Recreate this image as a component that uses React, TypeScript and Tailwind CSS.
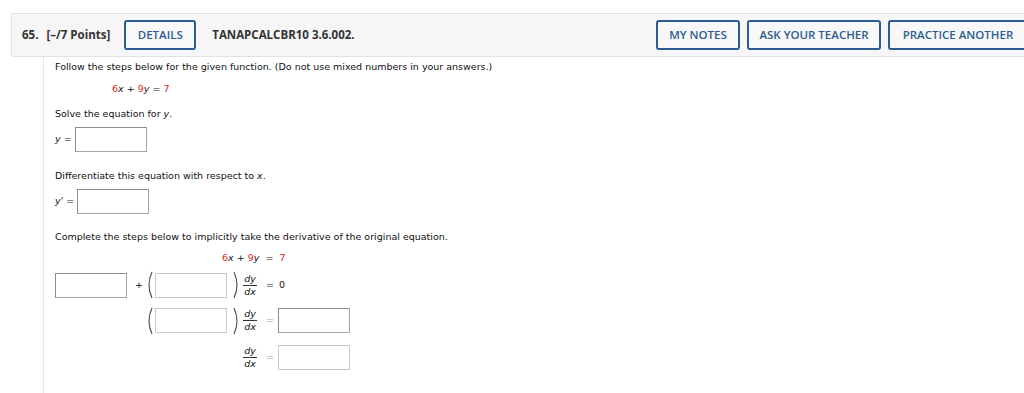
import React from "react";

const RED = "text-[#e3261c]";

function Eq({ wide = false }: { wide?: boolean }) {
  const sp = wide ? "  " : " ";
  return (
    <span className="whitespace-pre">
      <span className={RED}>6</span>
      <i>x</i> + <span className={RED}>9</span>
      <i>y</i>
      {sp}={sp}
      <span className={RED}>7</span>
    </span>
  );
}

function Box({ light = false }: { light?: boolean }) {
  return (
    <div
      className={`h-[25px] w-[72px] border bg-white ${
        light
          ? "border-[#c9c9c9]"
          : "border-[#a3a3a3] border-t-[#8c8c8c] border-l-[#8c8c8c]"
      }`}
    />
  );
}

function Paren({ side }: { side: "l" | "r" }) {
  const d = side === "l" ? "M7 1 Q1 14 7 27" : "M1 1 Q7 14 1 27";
  return (
    <svg width="8" height="28" viewBox="0 0 8 28" className="block">
      <path d={d} fill="none" stroke="#4a4a4a" strokeWidth="1.1" />
    </svg>
  );
}

function DyDx() {
  return (
    <div className="flex flex-col items-center italic leading-[10px] w-[14px]">
      <span className="border-b border-[#333] w-full text-center pb-[1px]">dy</span>
      <span className="pt-[1px]">dx</span>
    </div>
  );
}

function HeaderButton({ label, w }: { label: string; w: string }) {
  return (
    <button
      className={`h-[30px] ${w} border-2 border-[#2e5c92] rounded-[3px] text-[#2e5c92] text-[11.5px] font-semibold bg-[#f8f8f8] whitespace-nowrap`}
    >
      {label}
    </button>
  );
}

export default function App() {
  return (
    <div
      className="w-[1024px] h-[393px] bg-white overflow-hidden pt-[13px] pl-[11px]"
      style={{ fontFamily: "'Open Sans', sans-serif" }}
    >
      {/* question header */}
      <div className="w-[1040px] h-[44px] bg-[#f6f6f6] border border-[#e2e2e2] rounded-[2px] flex items-center text-[#333]">
        <div className="w-[644px] flex items-center text-[11.5px] font-bold">
          <span className="ml-[10px]">65.</span>
          <span className="ml-[8px]">[–/7 Points]</span>
          <div className="ml-[14px]">
            <HeaderButton label="DETAILS" w="w-[72px]" />
          </div>
          <span className="ml-[16px]">TANAPCALCBR10 3.6.002.</span>
        </div>
        <div className="flex gap-[7px]">
          <HeaderButton label="MY NOTES" w="w-[84px]" />
          <HeaderButton label="ASK YOUR TEACHER" w="w-[134px]" />
          <HeaderButton label="PRACTICE ANOTHER" w="w-[140px]" />
        </div>
      </div>

      {/* question body */}
      <div
        className="ml-[32px] border-l border-[#e6e6e6] h-[400px] pl-[11px] pt-[4px] text-[9.5px] text-[#111]"
        style={{ fontFamily: "'DejaVu Sans', Verdana, sans-serif" }}
      >
        <p className="leading-[12px]">
          Follow the steps below for the given function. (Do not use mixed numbers in your answers.)
        </p>
        <p className="mt-[10px] ml-[57px] leading-[12px]">
          <Eq />
        </p>
        <p className="mt-[13px] leading-[12px]">
          Solve the equation for <i>y</i>.
        </p>
        <div className="mt-[7px] flex items-center gap-[3px]">
          <span className="whitespace-pre">
            <i>y</i> =
          </span>
          <Box />
        </div>
        <p className="mt-[18px] leading-[12px]">
          Differentiate this equation with respect to <i>x</i>.
        </p>
        <div className="mt-[7px] flex items-center gap-[3px]">
          <span className="whitespace-pre">
            <i>y</i>' =
          </span>
          <Box />
        </div>
        <p className="mt-[17px] leading-[12px]">
          Complete the steps below to implicitly take the derivative of the original equation.
        </p>

        {/* implicit differentiation table */}
        <div className="mt-[9px] ml-[167px] leading-[12px]">
          <Eq wide />
        </div>
        <div className="mt-[6px] grid grid-cols-[80px_10px_10px_72px_16px_14px_21px_auto] grid-rows-[30px_41px_32px] items-center">
          {/* row 1 */}
          <Box />
          <span>+</span>
          <Paren side="l" />
          <Box light />
          <div className="pl-[6px]">
            <Paren side="r" />
          </div>
          <DyDx />
          <span className="pl-[9px]">=</span>
          <span className="pl-[1px]">0</span>

          {/* row 2 */}
          <span />
          <span />
          <Paren side="l" />
          <Box light />
          <div className="pl-[6px]">
            <Paren side="r" />
          </div>
          <DyDx />
          <span className="pl-[9px] text-[#9a9a9a]">=</span>
          <Box />

          {/* row 3 */}
          <span />
          <span />
          <span />
          <span />
          <span />
          <DyDx />
          <span className="pl-[9px] text-[#9a9a9a]">=</span>
          <Box light />
        </div>
      </div>
    </div>
  );
}
